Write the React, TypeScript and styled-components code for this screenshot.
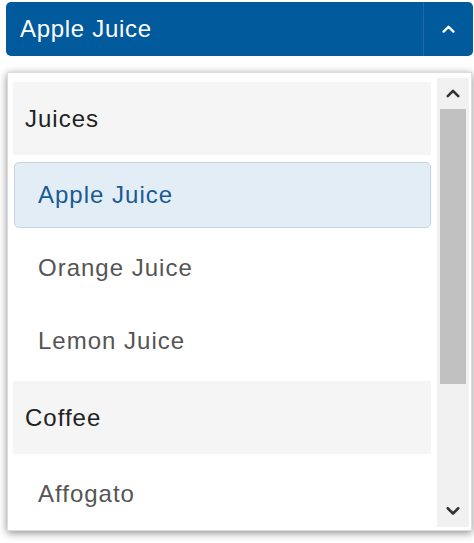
import React from "react";
import styled, { createGlobalStyle } from "styled-components";

const Global = createGlobalStyle`
  html, body { margin: 0; padding: 0; background: #ffffff; }
  body { font-family: "Liberation Sans", Arial, sans-serif; }
`;

const Page = styled.div`
  width: 474px;
  height: 543px;
  padding: 2px 1px 0 6px;
  box-sizing: border-box;
  display: flex;
  flex-direction: column;
  gap: 16px;
`;

const Trigger = styled.div`
  height: 54px;
  background: #005a9c;
  border-radius: 5px;
  display: flex;
  align-items: stretch;
  color: #ffffff;
`;

const TriggerLabel = styled.div`
  flex: 1;
  display: flex;
  align-items: center;
  padding-left: 14px;
  font-size: 24px;
  letter-spacing: 0.7px;
`;

const TriggerButton = styled.div`
  width: 49px;
  border-left: 1px solid #1f6aa6;
  display: flex;
  align-items: center;
  justify-content: center;
`;

const Panel = styled.div`
  margin-left: 1px;
  width: 465px;
  height: 459px;
  box-sizing: border-box;
  background: #ffffff;
  border: 1px solid #dcdcdc;
  box-shadow: 0 2px 8px rgba(0, 0, 0, 0.45);
  display: flex;
  gap: 6px;
  padding: 5px 2px 3px 5px;
`;

const List = styled.div`
  flex: 1;
  display: flex;
  flex-direction: column;
  gap: 7px;
  padding-top: 4px;
  overflow: hidden;
`;

const GroupHeader = styled.div`
  flex: none;
  height: 73px;
  background: #f5f5f5;
  display: flex;
  align-items: center;
  padding-left: 12px;
  font-size: 24px;
  letter-spacing: 1px;
  color: #222222;
`;

const Option = styled.div<{ $selected?: boolean }>`
  flex: none;
  height: 66px;
  box-sizing: border-box;
  margin-left: 1px;
  border-radius: 5px;
  border: 1px solid ${(p) => (p.$selected ? "#c3d5e6" : "transparent")};
  background: ${(p) => (p.$selected ? "#e3edf6" : "transparent")};
  color: ${(p) => (p.$selected ? "#1a5a94" : "#555555")};
  display: flex;
  align-items: center;
  padding-left: 23px;
  font-size: 24px;
  letter-spacing: 1px;
`;

const Scrollbar = styled.div`
  width: 32px;
  background: #f1f1f1;
  display: flex;
  flex-direction: column;
  align-items: center;
`;

const ScrollArrow = styled.div`
  height: 31px;
  width: 100%;
  display: flex;
  align-items: center;
  justify-content: center;
`;

const Track = styled.div`
  flex: 1;
  width: 100%;
  display: flex;
  flex-direction: column;
  align-items: center;
`;

const Thumb = styled.div`
  width: 26px;
  height: 275px;
  background: #c1c1c1;
`;

const Chevron = ({ up, color, w = 12 }: { up?: boolean; color: string; w?: number }) => (
  <svg width={w} height={w * 0.6} viewBox="0 0 12 7" fill="none">
    <path
      d={up ? "M1.5 6 L6 1.5 L10.5 6" : "M1.5 1 L6 5.5 L10.5 1"}
      stroke={color}
      strokeWidth="2.2"
      strokeLinecap="round"
      strokeLinejoin="round"
    />
  </svg>
);

export default function App() {
  return (
    <>
      <Global />
      <Page>
        <Trigger>
          <TriggerLabel>Apple Juice</TriggerLabel>
          <TriggerButton>
            <Chevron up color="#ffffff" w={13} />
          </TriggerButton>
        </Trigger>
        <Panel>
          <List>
            <GroupHeader>Juices</GroupHeader>
            <Option $selected>Apple Juice</Option>
            <Option>Orange Juice</Option>
            <Option>Lemon Juice</Option>
            <GroupHeader>Coffee</GroupHeader>
            <Option>Affogato</Option>
          </List>
          <Scrollbar>
            <ScrollArrow>
              <Chevron up color="#333333" w={14} />
            </ScrollArrow>
            <Track>
              <Thumb />
            </Track>
            <ScrollArrow>
              <Chevron color="#333333" w={14} />
            </ScrollArrow>
          </Scrollbar>
        </Panel>
      </Page>
    </>
  );
}
